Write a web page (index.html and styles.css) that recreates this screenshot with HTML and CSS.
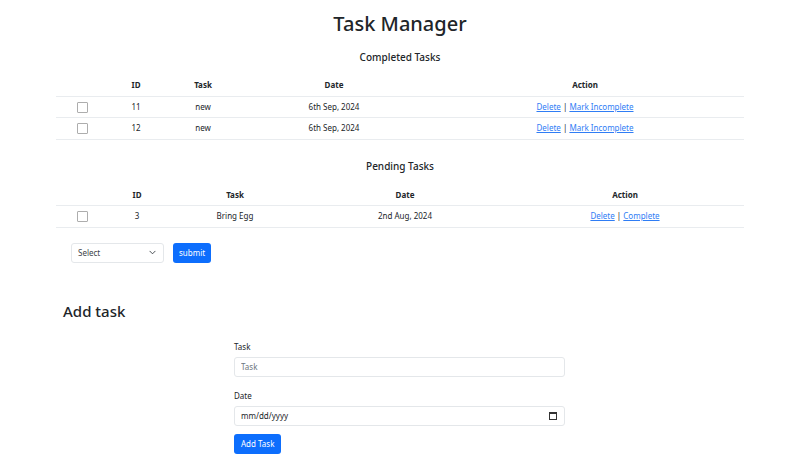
FILE: index.html
```html
<!DOCTYPE html>
<html>
<head>
  <link rel="stylesheet" href="styles.css">
</head>
<body>
  <div class="container">
    <h1 class="page-title">Task Manager</h1>

    <h5 class="section-title">Completed Tasks</h5>
    <table class="task-table">
      <colgroup>
        <col style="width: 52px">
        <col style="width: 56px">
        <col style="width: 78px">
        <col style="width: 184px">
        <col>
      </colgroup>
      <thead>
        <tr><th></th><th>ID</th><th>Task</th><th>Date</th><th>Action</th></tr>
      </thead>
      <tbody>
        <tr>
          <td><span class="check"></span></td>
          <td>11</td>
          <td>new</td>
          <td>6th Sep, 2024</td>
          <td><a href="#">Delete</a> | <a href="#">Mark Incomplete</a></td>
        </tr>
        <tr>
          <td><span class="check"></span></td>
          <td>12</td>
          <td>new</td>
          <td>6th Sep, 2024</td>
          <td><a href="#">Delete</a> | <a href="#">Mark Incomplete</a></td>
        </tr>
      </tbody>
    </table>

    <h5 class="section-title pending">Pending Tasks</h5>
    <table class="task-table">
      <colgroup>
        <col style="width: 52px">
        <col style="width: 58px">
        <col style="width: 138px">
        <col style="width: 202px">
        <col>
      </colgroup>
      <thead>
        <tr><th></th><th>ID</th><th>Task</th><th>Date</th><th>Action</th></tr>
      </thead>
      <tbody>
        <tr>
          <td><span class="check"></span></td>
          <td>3</td>
          <td>Bring Egg</td>
          <td>2nd Aug, 2024</td>
          <td><a href="#">Delete</a> | <a href="#">Complete</a></td>
        </tr>
      </tbody>
    </table>

    <div class="bulk-row">
      <div class="select-box">
        <span>Select</span>
        <svg width="7" height="7" viewBox="0 0 16 16"><path d="M2 5l6 6 6-6" fill="none" stroke="#343a40" stroke-width="2" stroke-linecap="round" stroke-linejoin="round"/></svg>
      </div>
      <button class="btn">submit</button>
    </div>

    <h3 class="add-title">Add task</h3>

    <form class="add-form">
      <label class="form-label">Task</label>
      <input class="form-control" type="text" placeholder="Task">
      <label class="form-label">Date</label>
      <div class="form-control date-box">
        <span>mm/dd/yyyy</span>
        <svg width="8" height="9" viewBox="0 0 8 9"><rect x="0.5" y="1.5" width="7" height="7" fill="none" stroke="#333" stroke-width="1"/><rect x="0" y="1" width="8" height="2" fill="#333"/></svg>
      </div>
      <button class="btn btn-add" type="button">Add Task</button>
    </form>
  </div>
</body>
</html>
```

FILE: styles.css
```css
body {
  margin: 0;
  font-family: 'Noto Sans', 'Open Sans', sans-serif;
  color: #212529;
  background: #fff;
  font-size: 8px;
}

.container {
  width: 688px;
  margin: 0 auto;
  padding: 0 6px;
}

.page-title {
  text-align: center;
  font-size: 20px;
  font-weight: 500;
  line-height: 25px;
  margin: 11px 0 15px;
}

.section-title {
  text-align: center;
  font-size: 10px;
  font-weight: 500;
  line-height: 13px;
  margin: 0 0 11px;
}

.section-title.pending {
  margin-top: 20px;
  margin-bottom: 12px;
}

.task-table {
  width: 100%;
  border-collapse: collapse;
  table-layout: fixed;
}

.task-table th,
.task-table td {
  text-align: center;
  padding: 4px 4px;
  line-height: 12.5px;
  font-size: 8px;
  border-bottom: 1px solid #e9ecef;
}

.task-table th {
  font-weight: bold;
}

.task-table a {
  color: #2f7df5;
}

.check {
  display: inline-block;
  width: 9px;
  height: 9px;
  border: 1px solid #adadad;
  border-radius: 1px;
  vertical-align: middle;
}

.bulk-row {
  display: flex;
  gap: 9px;
  margin: 15px 0 0 15px;
}

.select-box {
  width: 93px;
  height: 20px;
  box-sizing: border-box;
  border: 1px solid #e4e7ea;
  border-radius: 3px;
  display: flex;
  justify-content: space-between;
  align-items: center;
  padding: 0 7px 0 6px;
  font-size: 8px;
  color: #3d4349;
}

.btn {
  background: #0d6efd;
  color: #fff;
  border: none;
  border-radius: 3px;
  height: 20px;
  padding: 0 6px;
  font-family: inherit;
  font-size: 8px;
}

.add-title {
  font-size: 15px;
  font-weight: 500;
  line-height: 18px;
  margin: 39px 0 0 7px;
}

.add-form {
  width: 331px;
  margin: 21px 0 0 178px;
  display: flex;
  flex-direction: column;
  align-items: flex-start;
}

.form-label {
  font-size: 8px;
  line-height: 12px;
  margin-bottom: 4px;
}

.form-control {
  width: 100%;
  height: 20px;
  box-sizing: border-box;
  border: 1px solid #e4e7ea;
  border-radius: 3px;
  padding: 0 6px;
  font-family: inherit;
  font-size: 8px;
  color: #212529;
  margin-bottom: 13px;
}

.form-control::placeholder {
  color: #6c757d;
}

.date-box {
  display: flex;
  justify-content: space-between;
  align-items: center;
  padding-right: 7px;
  margin-bottom: 8px;
}

.btn-add {
  height: 20px;
  padding: 0 7px;
}
```
